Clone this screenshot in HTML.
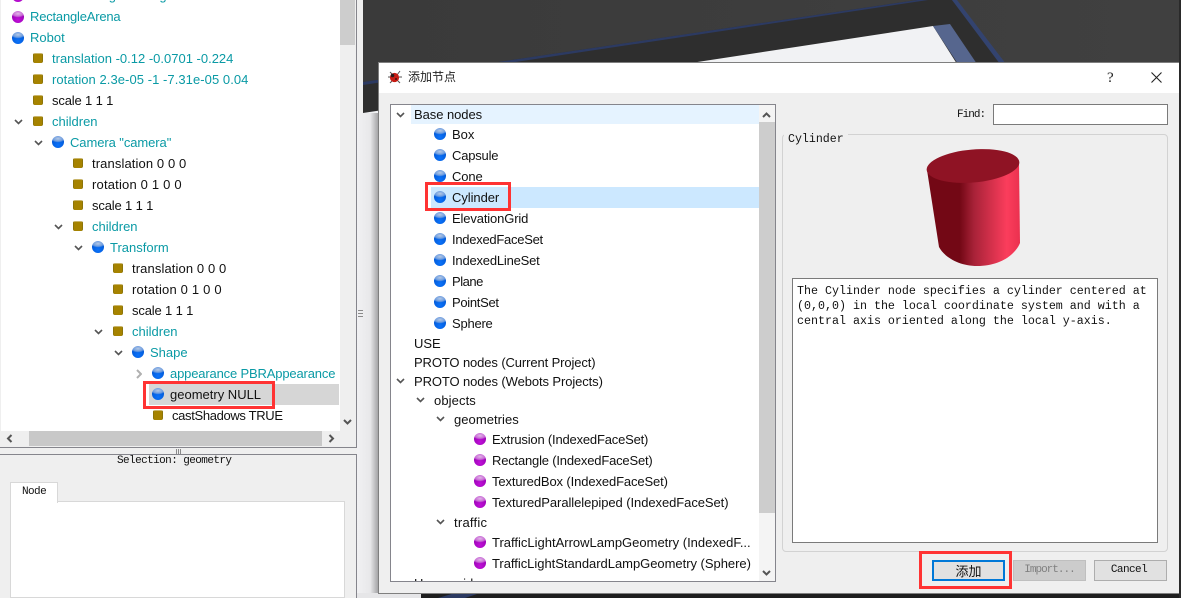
<!DOCTYPE html>
<html><head><meta charset="utf-8"><style>
html,body{margin:0;padding:0}
#r{position:relative;width:1181px;height:598px;overflow:hidden;background:#efefef;font-family:"Liberation Sans","Noto Sans CJK SC",sans-serif;font-size:13px;color:#111}
#r div,#r span,#r svg{position:absolute}
.t{line-height:20px;height:20px;white-space:nowrap;letter-spacing:0}
.g{color:#0a9aa5}
.m{font-family:"Liberation Mono","Noto Sans CJK SC",monospace;white-space:nowrap;color:#111}
.n{font-size:11px;letter-spacing:-.58px;line-height:14px}
.b,.p{width:12px;height:12px;border-radius:50%}
.b{background:radial-gradient(ellipse 60% 32% at 50% 22%,#b6c9e4 0,#6b9be0 70%,rgba(60,120,220,0) 100%),radial-gradient(circle at 50% 75%,#0b72fa,#0055d0 80%,#003c96)}
.p{background:radial-gradient(ellipse 60% 32% at 50% 22%,#e0b8e6 0,#c868d6 70%,rgba(180,60,200,0) 100%),radial-gradient(circle at 50% 75%,#c010d8,#9400b0 80%,#6c0080)}
.s{width:10px;height:10px;border-radius:2px;background:#a68300;border-top:1px solid #c9b56a;border-left:1px solid #8d7508;border-right:1px solid #8d7508;box-sizing:border-box}
.a{width:9px;height:6px;fill:none;stroke:#555;stroke-width:1.6}
.red{border:3px solid #f33;box-sizing:border-box}
.btn{box-sizing:border-box;background:#e1e1e1;border:1px solid #adadad;text-align:center;line-height:19px}
</style></head><body><div id="r">

<!-- 3D scene -->
<svg style="left:357px;top:0" width="824" height="598" viewBox="357 0 824 598">
<defs><linearGradient id="sh" x1="0" x2="1"><stop offset="0" stop-color="#f1f1f3"/><stop offset=".6" stop-color="#e8e8ea"/><stop offset="1" stop-color="#9c9c9e"/></linearGradient>
<linearGradient id="bg" x1="0" x2="1" y1="0" y2="0"><stop offset="0" stop-color="#3a3a3a"/><stop offset="1" stop-color="#404040"/></linearGradient>
<linearGradient id="cy" x1="927" x2="1021" y1="0" y2="0" gradientUnits="userSpaceOnUse"><stop offset="0" stop-color="#730815"/><stop offset=".35" stop-color="#730815"/><stop offset=".5" stop-color="#a82238"/><stop offset=".85" stop-color="#fb3d5c"/><stop offset="1" stop-color="#e9304e"/></linearGradient></defs>
<rect x="357" width="824" height="598" fill="url(#bg)"/>
<polygon points="363,82 917,0 952,0 1004,64 1000,70 363,113" fill="#2e2e2e"/>
<polygon points="363,82 917,0 928,0 363,85" fill="#2c3a62"/>
<polygon points="952,0 957,0 1006,64 1000,64" fill="#33436f"/>
<polygon points="363,113 933,26 957,64 363,130" fill="#f1f2f4"/>
<polygon points="933,26 950,24 977,64 958,64" fill="#56668e"/>
<rect x="357" y="0" width="6" height="598" fill="#efefef"/>
<rect x="357" y="113" width="22" height="485" fill="url(#sh)"/>
<rect x="357" y="593" width="824" height="5" fill="#1e1e1e"/>
<rect x="357" y="593" width="64" height="5" fill="#e6e6e8"/>
<polygon points="438,598 455,593 480,593 465,598" fill="#2c3a62"/>
<rect x="1179" y="0" width="2" height="598" fill="#2a2a2a"/>
</svg>

<!-- left panel -->
<div style="left:0;top:0;width:357px;height:448px;background:#efefef;border-right:1px solid #85858c;border-bottom:1px solid #85858c;box-sizing:border-box"></div>
<div style="left:1px;top:0;width:339px;height:431px;background:#fff"></div>
<div style="left:149px;top:384px;width:190px;height:21px;background:#d6d6d6"></div>
<div style="left:340px;top:0;width:15px;height:45px;background:#cdcdcd"></div>
<svg class="a" style="left:343px;top:419px;stroke-width:2"><path d="M1 1l3.5 3.5L8 1"/></svg>
<div style="left:29px;top:431px;width:293px;height:15px;background:#c8c8c8"></div>
<svg style="left:6px;top:434px;fill:none;stroke:#555;stroke-width:2" width="7" height="9"><path d="M5.5 1L2 4.5 5.5 8"/></svg>
<svg style="left:328px;top:434px;fill:none;stroke:#555;stroke-width:2" width="7" height="9"><path d="M1.5 1L5 4.5 1.5 8"/></svg>
<svg style="left:175px;top:449px;stroke:#8a8a8a" width="8" height="5"><path d="M1.5 0v5M3.5 0v5M5.5 0v5"/></svg>
<svg style="left:358px;top:310px;stroke:#8a8a8a" width="5" height="7"><path d="M0 .5h5M0 3.5h5M0 6.5h5"/></svg>

<span class="p" style="left:12px;top:-10px"></span><span class="t g" style="left:30px;top:-14px">TexturedBackgroundLight</span>
<span class="p" style="left:12px;top:11px"></span><span class="t g" style="left:30px;top:7px;letter-spacing:-.2px">RectangleArena</span>
<span class="b" style="left:12px;top:32px"></span><span class="t g" style="left:30px;top:28px">Robot</span>
<span class="s" style="left:33px;top:53px"></span><span class="t g" style="left:52px;top:49px">translation -0.12 -0.0701 -0.224</span>
<span class="s" style="left:33px;top:74px"></span><span class="t g" style="left:52px;top:70px;letter-spacing:.06px">rotation 2.3e-05 -1 -7.31e-05 0.04</span>
<span class="s" style="left:33px;top:95px"></span><span class="t" style="left:52px;top:91px;letter-spacing:-.15px">scale 1 1 1</span>
<svg class="a" style="left:14px;top:119px"><path d="M1 1l3.5 3.5L8 1"/></svg><span class="s" style="left:33px;top:116px"></span><span class="t g" style="left:52px;top:112px">children</span>
<svg class="a" style="left:34px;top:140px"><path d="M1 1l3.5 3.5L8 1"/></svg><span class="b" style="left:52px;top:136px"></span><span class="t g" style="left:70px;top:133px;letter-spacing:-.08px">Camera "camera"</span>
<span class="s" style="left:73px;top:158px"></span><span class="t" style="left:92px;top:154px;letter-spacing:.11px">translation 0 0 0</span>
<span class="s" style="left:73px;top:179px"></span><span class="t" style="left:92px;top:175px;letter-spacing:.19px">rotation 0 1 0 0</span>
<span class="s" style="left:73px;top:200px"></span><span class="t" style="left:92px;top:196px;letter-spacing:-.15px">scale 1 1 1</span>
<svg class="a" style="left:54px;top:224px"><path d="M1 1l3.5 3.5L8 1"/></svg><span class="s" style="left:73px;top:221px"></span><span class="t g" style="left:92px;top:217px">children</span>
<svg class="a" style="left:74px;top:245px"><path d="M1 1l3.5 3.5L8 1"/></svg><span class="b" style="left:92px;top:241px"></span><span class="t g" style="left:110px;top:238px">Transform</span>
<span class="s" style="left:113px;top:263px"></span><span class="t" style="left:132px;top:259px;letter-spacing:.11px">translation 0 0 0</span>
<span class="s" style="left:113px;top:284px"></span><span class="t" style="left:132px;top:280px;letter-spacing:.19px">rotation 0 1 0 0</span>
<span class="s" style="left:113px;top:305px"></span><span class="t" style="left:132px;top:301px;letter-spacing:-.15px">scale 1 1 1</span>
<svg class="a" style="left:94px;top:329px"><path d="M1 1l3.5 3.5L8 1"/></svg><span class="s" style="left:113px;top:326px"></span><span class="t g" style="left:132px;top:322px">children</span>
<svg class="a" style="left:114px;top:350px"><path d="M1 1l3.5 3.5L8 1"/></svg><span class="b" style="left:132px;top:346px"></span><span class="t g" style="left:150px;top:343px">Shape</span>
<svg style="left:136px;top:369px;fill:none;stroke:#b0b0b0;stroke-width:2" width="6" height="10"><path d="M1 1l4 4-4 4"/></svg><span class="b" style="left:152px;top:367px"></span><span class="t g" style="left:170px;top:364px;letter-spacing:-.16px">appearance PBRAppearance</span>
<span class="b" style="left:152px;top:388px"></span><span class="t" style="left:170px;top:385px">geometry NULL</span>
<span class="s" style="left:153px;top:410px"></span><span class="t" style="left:172px;top:406px;letter-spacing:-.34px">castShadows TRUE</span>
<div class="red" style="left:143px;top:381px;width:132px;height:28px"></div>

<!-- selection panel -->
<div style="left:0;top:454px;width:357px;height:144px;background:#efefef;border-top:1px solid #85858c;border-right:1px solid #85858c;box-sizing:border-box"></div>
<span class="m n" style="left:117px;top:454px">Selection: geometry</span>
<div style="left:10px;top:501px;width:335px;height:97px;background:#fff;border:1px solid #d8d8d8;box-sizing:border-box"></div>
<div style="left:10px;top:482px;width:48px;height:21px;background:#fff;border:1px solid #d8d8d8;border-bottom:none;box-sizing:border-box"></div>
<span class="m n" style="left:22px;top:485px">Node</span>

<!-- dialog -->
<div style="left:378px;top:62px;width:801px;height:532px;background:#efefef;border:1px solid #7f7f7f;border-right:none;box-sizing:border-box"></div>
<div style="left:379px;top:63px;width:800px;height:30px;background:#fff"></div>
<svg style="left:387px;top:69px" width="16" height="16" viewBox="0 0 16 16"><g stroke="#555" stroke-width="1"><path d="M3 3l3 3M13 2l-3 4M1 8h3M15 8h-3M3 14l3-3M13 14l-3-3"/></g><circle cx="7.5" cy="8.5" r="4.6" fill="#c61c14"/><circle cx="5.5" cy="6.5" r="1.8" fill="#2a1a1a"/><circle cx="9" cy="10" r="1" fill="#3a1010"/></svg>
<span style="left:408px;top:68px;font-size:12px;line-height:18px;white-space:nowrap;font-family:'Noto Sans CJK SC',sans-serif;color:#222">添加节点</span>
<span style="left:1107px;top:70px;font-family:'Liberation Serif',serif;font-size:15px;line-height:16px;color:#222">?</span>
<svg style="left:1151px;top:72px;stroke:#222;stroke-width:1.1" width="11" height="11"><path d="M.5 .5l10 10M10.5 .5l-10 10"/></svg>

<!-- dialog tree -->
<div style="left:390px;top:104px;width:386px;height:478px;background:#fff;border:1px solid #85858c;box-sizing:border-box;overflow:hidden">
<span class="t" style="left:23px;top:469px">Humanoids</span>
</div>
<div style="left:411px;top:105px;width:348px;height:19px;background:#e5f3ff"></div>
<div style="left:431px;top:187px;width:328px;height:21px;background:#cce8ff"></div>
<div style="left:759px;top:105px;width:16px;height:476px;background:#f4f4f4"></div>
<div style="left:759px;top:122px;width:16px;height:391px;background:#cdcdcd"></div>
<svg class="a" style="left:762px;top:112px;stroke-width:2"><path d="M1 5l3.5-3.5L8 5"/></svg>
<svg class="a" style="left:762px;top:570px;stroke-width:2"><path d="M1 1l3.5 3.5L8 1"/></svg>

<svg class="a" style="left:396px;top:112px"><path d="M1 1l3.5 3.5L8 1"/></svg><span class="t" style="left:414px;top:105px;letter-spacing:-.06px">Base nodes</span>
<span class="b" style="left:434px;top:128px"></span><span class="t" style="left:452px;top:125px">Box</span>
<span class="b" style="left:434px;top:149px"></span><span class="t" style="left:452px;top:146px;letter-spacing:-.2px">Capsule</span>
<span class="b" style="left:434px;top:170px"></span><span class="t" style="left:452px;top:167px;letter-spacing:-.1px">Cone</span>
<span class="b" style="left:434px;top:191px"></span><span class="t" style="left:452px;top:188px;letter-spacing:-.06px">Cylinder</span>
<span class="b" style="left:434px;top:212px"></span><span class="t" style="left:452px;top:209px;letter-spacing:-.14px">ElevationGrid</span>
<span class="b" style="left:434px;top:233px"></span><span class="t" style="left:452px;top:230px;letter-spacing:-.27px">IndexedFaceSet</span>
<span class="b" style="left:434px;top:254px"></span><span class="t" style="left:452px;top:251px;letter-spacing:-.2px">IndexedLineSet</span>
<span class="b" style="left:434px;top:275px"></span><span class="t" style="left:452px;top:272px;letter-spacing:-.46px">Plane</span>
<span class="b" style="left:434px;top:296px"></span><span class="t" style="left:452px;top:293px;letter-spacing:-.31px">PointSet</span>
<span class="b" style="left:434px;top:317px"></span><span class="t" style="left:452px;top:314px;letter-spacing:-.23px">Sphere</span>
<span class="t" style="left:414px;top:334px">USE</span>
<span class="t" style="left:414px;top:353px;letter-spacing:-.11px">PROTO nodes (Current Project)</span>
<svg class="a" style="left:396px;top:378px"><path d="M1 1l3.5 3.5L8 1"/></svg><span class="t" style="left:414px;top:372px;letter-spacing:-.1px">PROTO nodes (Webots Projects)</span>
<svg class="a" style="left:416px;top:397px"><path d="M1 1l3.5 3.5L8 1"/></svg><span class="t" style="left:434px;top:391px;letter-spacing:.1px">objects</span>
<svg class="a" style="left:436px;top:416px"><path d="M1 1l3.5 3.5L8 1"/></svg><span class="t" style="left:454px;top:410px;letter-spacing:.05px">geometries</span>
<span class="p" style="left:474px;top:433px"></span><span class="t" style="left:492px;top:430px;letter-spacing:-.19px">Extrusion (IndexedFaceSet)</span>
<span class="p" style="left:474px;top:454px"></span><span class="t" style="left:492px;top:451px;letter-spacing:-.19px">Rectangle (IndexedFaceSet)</span>
<span class="p" style="left:474px;top:475px"></span><span class="t" style="left:492px;top:472px;letter-spacing:-.12px">TexturedBox (IndexedFaceSet)</span>
<span class="p" style="left:474px;top:496px"></span><span class="t" style="left:492px;top:493px;letter-spacing:-.07px">TexturedParallelepiped (IndexedFaceSet)</span>
<svg class="a" style="left:436px;top:519px"><path d="M1 1l3.5 3.5L8 1"/></svg><span class="t" style="left:454px;top:513px;letter-spacing:.25px">traffic</span>
<span class="p" style="left:474px;top:536px"></span><span class="t" style="left:492px;top:533px">TrafficLightArrowLampGeometry (IndexedF...</span>
<span class="p" style="left:474px;top:557px"></span><span class="t" style="left:492px;top:554px;letter-spacing:-.03px">TrafficLightStandardLampGeometry (Sphere)</span>
<div class="red" style="left:425px;top:182px;width:86px;height:29px"></div>

<!-- right side -->
<span class="m n" style="left:957px;top:108px;letter-spacing:-.98px">Find:</span>
<div style="left:993px;top:104px;width:175px;height:21px;background:#fff;border:1px solid #7a7a7a;box-sizing:border-box"></div>
<div style="left:782px;top:134px;width:386px;height:418px;border:1px solid #d2d2d2;border-radius:4px;box-sizing:border-box"></div>
<div style="left:784px;top:130px;width:64px;height:16px;background:#efefef"></div>
<span class="m" style="left:788px;top:132px;font-size:11.6px;line-height:15px">Cylinder</span>
<svg style="left:920px;top:142px" width="110" height="130" viewBox="920 142 110 130">
<path d="M927 170L939 247C945 258 960 266 977 266C1000 266 1015 255 1020 243L1019 162Z" fill="url(#cy)"/>
<ellipse cx="973" cy="166" rx="46.5" ry="16.5" transform="rotate(-5 973 166)" fill="#8f1324"/>
</svg>
<div style="left:792px;top:278px;width:366px;height:265px;background:#fff;border:1px solid #7a7a7a;box-sizing:border-box"></div>
<span class="m" style="left:797px;top:284px;font-size:11.67px;line-height:15px">The Cylinder node specifies a cylinder centered at<br>(0,0,0) in the local coordinate system and with a<br>central axis oriented along the local y-axis.</span>

<div class="btn m" style="left:932px;top:560px;width:73px;height:21px;border:2px solid #0078d7;font-size:13px;line-height:18px;font-family:'Noto Sans CJK SC',sans-serif">添加</div>
<div class="btn m" style="left:1013px;top:560px;width:73px;height:21px;background:#ccc;border-color:#bfbfbf;color:#808080;font-size:11px;letter-spacing:-1px">Import...</div>
<div class="btn m" style="left:1094px;top:560px;width:73px;height:21px;border-color:#adadad;font-size:11px;letter-spacing:-.55px;padding-right:3px">Cancel</div>
<div class="red" style="left:919px;top:551px;width:93px;height:38px"></div>

</div></body></html>
